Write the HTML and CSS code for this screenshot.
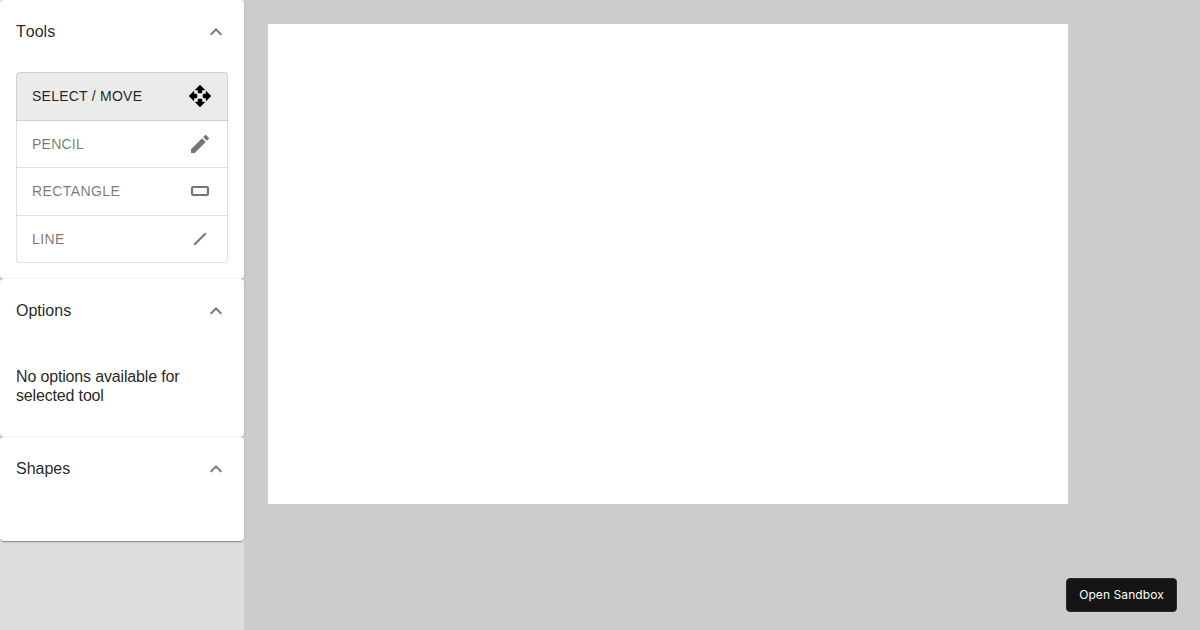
FILE: index.html
```html
<!DOCTYPE html>
<html lang="en">
<head>
<meta charset="utf-8">
<title>Drawing tools</title>
<link rel="stylesheet" href="styles.css">
</head>
<body>
<div class="app">
  <aside class="sidebar">
    <section class="panel">
      <header class="panel-head"><span>Tools</span>
        <svg class="chev" viewBox="0 0 24 24"><path d="M12 8l-6 6 1.41 1.41L12 10.83l4.59 4.58L18 14z"/></svg>
      </header>
      <div class="panel-body">
        <div class="tools">
          <button class="tool selected tight"><span>Select / Move</span>
            <svg class="icon" viewBox="0 0 24 24"><path d="M10 9h4V6h3l-5-5-5 5h3v3zm-1 1H6V7l-5 5 5 5v-3h3v-4zm14 2l-5-5v3h-3v4h3v3l5-5zm-9 3h-4v3H7l5 5 5-5h-3v-3z"/></svg>
          </button>
          <button class="tool tight"><span>Pencil</span>
            <svg class="icon" viewBox="0 0 24 24"><path d="M3 17.25V21h3.75L17.81 9.94l-3.75-3.75L3 17.25zM20.71 7.04c.39-.39.39-1.02 0-1.41l-2.34-2.34c-.39-.39-1.02-.39-1.41 0l-1.83 1.83 3.75 3.75 1.83-1.83z"/></svg>
          </button>
          <button class="tool"><span>Rectangle</span>
            <svg class="icon" viewBox="0 0 24 24"><rect class="outline" x="4" y="8" width="16" height="8" rx="1.2"/></svg>
          </button>
          <button class="tool"><span>Line</span>
            <svg class="icon" viewBox="0 0 24 24"><path class="stroke" d="M6.2 17.8L17.8 6.2"/></svg>
          </button>
        </div>
      </div>
    </section>
    <section class="panel">
      <header class="panel-head"><span>Options</span>
        <svg class="chev" viewBox="0 0 24 24"><path d="M12 8l-6 6 1.41 1.41L12 10.83l4.59 4.58L18 14z"/></svg>
      </header>
      <div class="panel-body">
        <p class="note">No options available for selected tool</p>
      </div>
    </section>
    <section class="panel">
      <header class="panel-head"><span>Shapes</span>
        <svg class="chev" viewBox="0 0 24 24"><path d="M12 8l-6 6 1.41 1.41L12 10.83l4.59 4.58L18 14z"/></svg>
      </header>
      <div class="panel-body"><div class="empty"></div></div>
    </section>
  </aside>
  <main class="stage">
    <div class="canvas"></div>
  </main>
</div>
<a class="sandbox" href="#">Open Sandbox</a>
</body>
</html>
```
FILE: styles.css
```css
* { box-sizing: border-box; }
html, body { height: 100%; margin: 0; }
body {
  font-family: "Liberation Sans", Arial, sans-serif;
  color: rgba(0, 0, 0, 0.87);
  overflow: hidden;
}
.app { display: flex; height: 100%; }
.sidebar { width: 244px; flex: none; background: #dddddd; }
.stage { flex: 1; background: #cccccc; padding: 24px; }
.canvas { width: 800px; height: 480px; background: #ffffff; }

.panel {
  position: relative;
  background: #ffffff;
  border-radius: 4px;
  box-shadow: 0 2px 1px -1px rgba(0,0,0,.2), 0 1px 1px 0 rgba(0,0,0,.14), 0 1px 3px 0 rgba(0,0,0,.12);
}
.panel + .panel::before {
  content: "";
  position: absolute;
  top: -1px;
  left: 0;
  right: 0;
  height: 1px;
  background: rgba(0, 0, 0, 0.02);
}
.panel-head {
  height: 64px;
  padding: 0 16px;
  display: flex;
  align-items: center;
  justify-content: space-between;
  font-size: 16px;
  line-height: 24px;
  font-kerning: none;
}
.chev { width: 24px; height: 24px; fill: rgba(0, 0, 0, 0.54); }
.panel-body { padding: 8px 16px 16px; }

.tools { display: flex; flex-direction: column; }
.tool {
  display: flex;
  align-items: center;
  justify-content: space-between;
  padding: 11px 15px;
  margin: 0;
  font: 400 14px/24.5px "Liberation Sans", Arial, sans-serif;
  letter-spacing: 0.4px;
  text-transform: uppercase;
  color: rgba(0, 0, 0, 0.54);
  background: transparent;
  border: 1px solid rgba(0, 0, 0, 0.12);
}
.tool.tight { letter-spacing: 0.24px; }
.tool + .tool { margin-top: -1px; border-top-color: transparent; }
.tool:first-child { border-radius: 4px 4px 0 0; }
.tool:last-child { border-radius: 0 0 4px 4px; }
.tool.selected { color: rgba(0, 0, 0, 0.87); background: rgba(0, 0, 0, 0.08); }
.icon { width: 24px; height: 24px; flex: none; fill: currentColor; }
.tool.selected .icon { fill: #000000; stroke: #000000; stroke-width: 0.4; }
.outline { fill: none; stroke: currentColor; stroke-width: 2.2; }
.stroke { fill: none; stroke: currentColor; stroke-width: 2; }

.note { margin: 16px 0; font-size: 16px; line-height: 19px; letter-spacing: -0.16px; }
.empty { height: 16px; }

.sandbox {
  position: fixed;
  right: 23px;
  bottom: 18px;
  width: 111px;
  height: 34px;
  display: flex;
  align-items: center;
  justify-content: center;
  padding-bottom: 1px;
  background: #151515;
  border: 1px solid #2a2a2a;
  border-radius: 4px;
  color: #ffffff;
  font: 400 12px/1 Inter, sans-serif;
  letter-spacing: 0.08px;
  text-decoration: none;
}
```
